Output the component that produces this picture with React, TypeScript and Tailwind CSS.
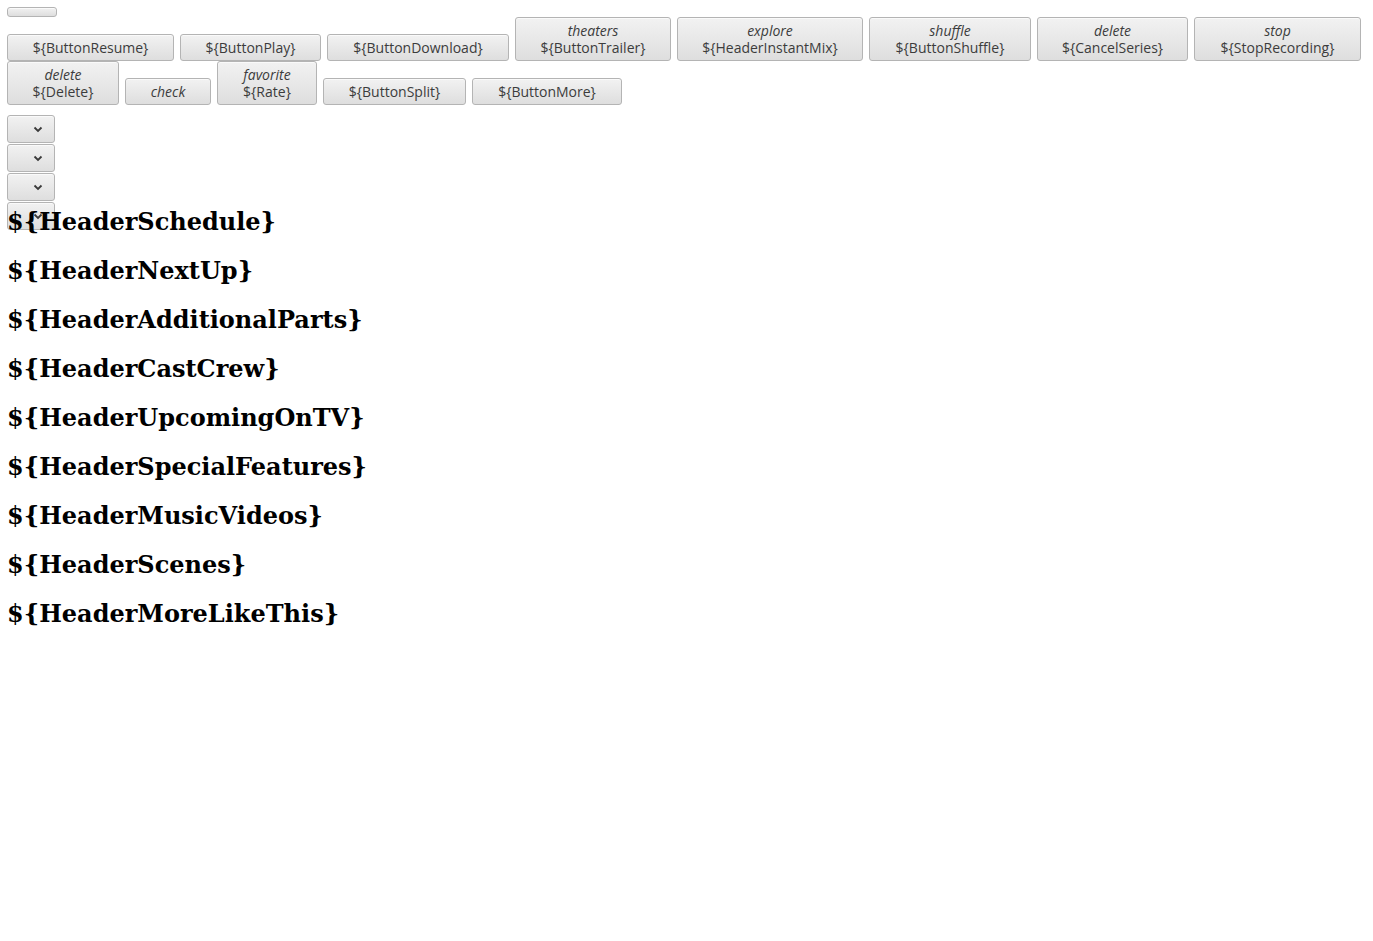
import React from "react";

type Btn = { icon?: string; label?: string; w: string };

const row1: Btn[] = [
  { label: "${ButtonResume}", w: "w-[167px]" },
  { label: "${ButtonPlay}", w: "w-[141px]" },
  { label: "${ButtonDownload}", w: "w-[182px]" },
  { icon: "theaters", label: "${ButtonTrailer}", w: "w-[156px]" },
  { icon: "explore", label: "${HeaderInstantMix}", w: "w-[186px]" },
  { icon: "shuffle", label: "${ButtonShuffle}", w: "w-[162px]" },
  { icon: "delete", label: "${CancelSeries}", w: "w-[151px]" },
  { icon: "stop", label: "${StopRecording}", w: "w-[167px]" },
];

const row2: Btn[] = [
  { icon: "delete", label: "${Delete}", w: "w-[112px]" },
  { icon: "check", w: "w-[86px]" },
  { icon: "favorite", label: "${Rate}", w: "w-[100px]" },
  { label: "${ButtonSplit}", w: "w-[143px]" },
  { label: "${ButtonMore}", w: "w-[150px]" },
];

const headers = [
  "${HeaderSchedule}",
  "${HeaderNextUp}",
  "${HeaderAdditionalParts}",
  "${HeaderCastCrew}",
  "${HeaderUpcomingOnTV}",
  "${HeaderSpecialFeatures}",
  "${HeaderMusicVideos}",
  "${HeaderScenes}",
  "${HeaderMoreLikeThis}",
];

const btnBase =
  "rounded-[3px] border border-[#b4b4b4] bg-gradient-to-b from-[#f2f2f2] to-[#dedede] text-[#3c3c3c] shadow-[inset_0_1px_0_#fafafa]";

function ActionButton({ icon, label, w }: Btn) {
  return (
    <button
      className={`${btnBase} ${w} ${
        icon && label ? "h-[44px]" : "h-[27px]"
      } flex shrink-0 flex-col items-center justify-center text-[14px] leading-[17px]`}
    >
      {icon && <span className="italic">{icon}</span>}
      {label && <span>{label}</span>}
    </button>
  );
}

function Chevron() {
  return (
    <svg width="10" height="7" viewBox="0 0 10 7" className="ml-[14px]">
      <path d="M1.5 1.5 L5 5 L8.5 1.5" fill="none" stroke="#3a3a3a" strokeWidth="1.8" />
    </svg>
  );
}

export default function App() {
  return (
    <div className="min-h-[941px] bg-white px-[7px] pt-[7px] font-['Open_Sans',sans-serif]">
      {/* empty top button */}
      <button className={`${btnBase} block h-[10px] w-[50px]`} />

      {/* action buttons */}
      <div className="flex items-end gap-[6px]">
        {row1.map((b, i) => (
          <ActionButton key={i} {...b} />
        ))}
      </div>
      <div className="flex items-end gap-[6px]">
        {row2.map((b, i) => (
          <ActionButton key={i} {...b} />
        ))}
      </div>

      {/* selects */}
      <div className="mt-[10px] flex h-[93px] flex-col gap-[1px]">
        {[0, 1, 2, 3].map((i) => (
          <button
            key={i}
            className={`${btnBase} flex h-[28px] w-[48px] shrink-0 items-center justify-center`}
          >
            <Chevron />
          </button>
        ))}
      </div>

      {/* section headers */}
      <div className="relative flex flex-col gap-[21px]">
        {headers.map((h) => (
          <h2
            key={h}
            className="font-['DejaVu_Serif',serif] text-[24px] font-bold leading-[28px] text-black"
          >
            {h}
          </h2>
        ))}
      </div>
    </div>
  );
}
